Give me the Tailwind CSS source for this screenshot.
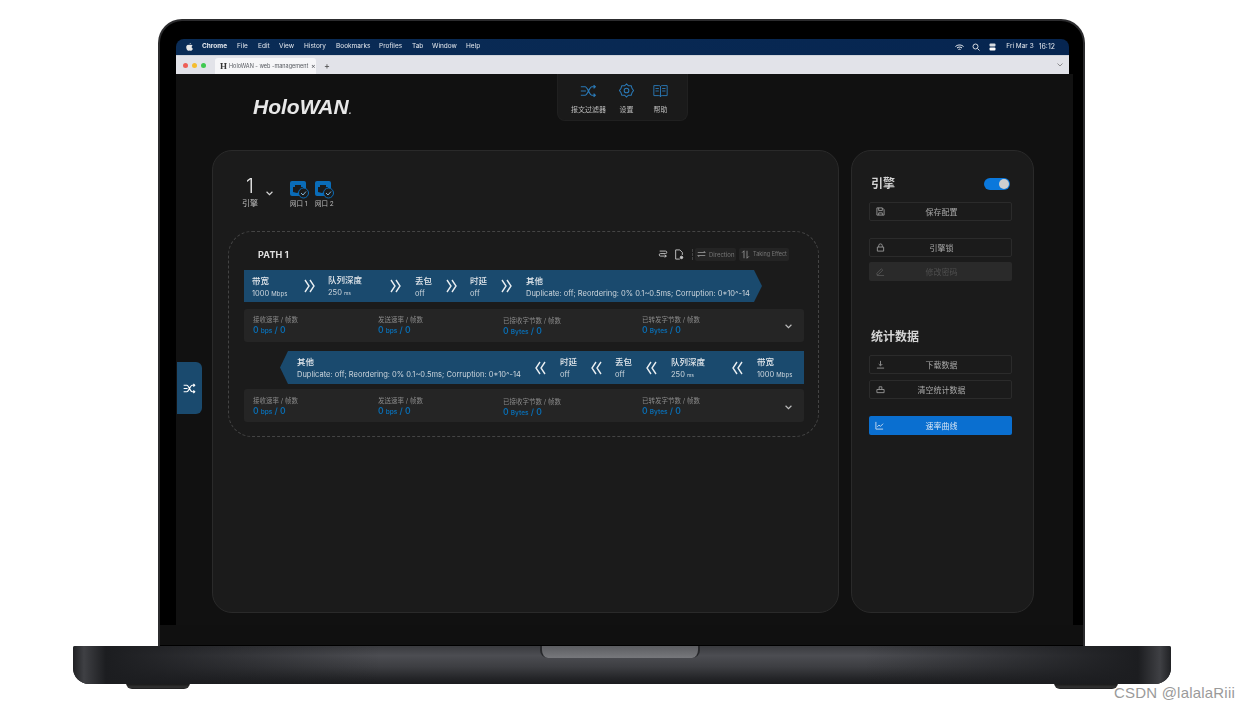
<!DOCTYPE html>
<html lang="zh">
<head>
  <meta charset="UTF-8" />
  <title>HoloWAN</title>
  <script src="https://cdn.jsdelivr.net/npm/@tailwindcss/browser@4"></script>
</head>
<body class="bg-white">
<div class="relative w-[1249px] h-[709px] overflow-hidden bg-white font-['Inter','Noto_Sans_CJK_SC',sans-serif]">

  <!-- 机身底座 -->
  <div class="absolute left-[126px] top-[683px] w-[64px] h-[6px] rounded-b-md bg-[linear-gradient(180deg,#111,#333_70%,#1c1c1e)] blur-[0.4px]"></div>
  <div class="absolute left-[1054px] top-[683px] w-[64px] h-[6px] rounded-b-md bg-[linear-gradient(180deg,#111,#333_70%,#1c1c1e)] blur-[0.4px]"></div>
  <div class="absolute left-[73px] top-[646px] w-[1098px] h-[38px] rounded-b-[16px] rounded-t-[2px] bg-[linear-gradient(180deg,#3a3b3f_0%,#4c4d52_25%,#3d3e42_55%,#242528_85%,#1b1b1e_100%)] overflow-hidden blur-[0.4px]">
    <div class="absolute inset-0 bg-[linear-gradient(90deg,#202124_0%,#3f4044_1%,#1c1d20_3%,transparent_28%,transparent_72%,#1c1d20_97%,#3f4044_99%,#202124_100%)]"></div>
    <div class="absolute left-[467px] top-0 w-[160px] h-[12px] rounded-b-lg bg-[linear-gradient(180deg,#5c5d61,#77787c)] border-l-2 border-r-2 border-[#26272a]"></div>
  </div>

  <!-- 屏幕外壳 -->
  <div class="absolute left-[158px] top-[19px] w-[927px] h-[627px] rounded-t-[24px] bg-black border-x-2 border-t-2 border-[#2c2c2e] pt-[18px] px-[16px] blur-[0.4px]">
    <div class="relative w-[897px] h-[586px] flex flex-col">

      <!-- 系统菜单栏 -->
      <div class="w-[893px] h-[16px] shrink-0 rounded-t-lg bg-[linear-gradient(90deg,#0a2c56,#062550)] flex items-center text-[6.5px] text-[#e4e8ee] pl-[10px] pr-[14px]">
        <svg class="w-[7px] h-[8px] mr-[9px]" viewBox="0 0 16 18" fill="#e8e8e8"><path d="M11 0c.2 1.800-1.400 3.500-3 3.400C7.800 1.700 9.500.1 11 0zM8 4.600c.9 0 2-.9 3.400-.9 1.600 0 2.900.8 3.600 2-3.100 1.800-2.500 5.900.7 7.100-.8 2-2.300 4.700-4 4.700-1.100 0-1.700-.7-3-.7s-2 .7-3 .7C3.300 17.500.5 13 .5 9.300c0-3.300 2.200-5.500 4.500-5.500 1.300 0 2.300.8 3 .8z"/></svg>
        <span class="font-bold w-[35px]">Chrome</span>
        <span class="w-[21px]">File</span>
        <span class="w-[21px]">Edit</span>
        <span class="w-[25px]">View</span>
        <span class="w-[32px]">History</span>
        <span class="w-[43px]">Bookmarks</span>
        <span class="w-[33px]">Profiles</span>
        <span class="w-[20px]">Tab</span>
        <span class="w-[34px]">Window</span>
        <span>Help</span>
        <div class="ml-auto flex items-center gap-[8px]">
          <svg class="w-[9px] h-[7px]" viewBox="0 0 18 14" fill="none" stroke="#fff" stroke-width="2"><path d="M1 5c4.500-4 11.500-4 16 0M4 8c2.800-2.500 7.200-2.500 10 0M7 11c1.200-1 2.800-1 4 0"/></svg>
          <svg class="w-[8px] h-[8px]" viewBox="0 0 16 16" fill="none" stroke="#d8dce2" stroke-width="2"><circle cx="7" cy="7" r="5"/><path d="M11 11l4 4"/></svg>
          <svg class="w-[9px] h-[8px]" viewBox="0 0 18 16" fill="#d8dce2"><rect x="3" y="1" width="12" height="6" rx="2"/><rect x="3" y="9" width="12" height="6" rx="2" fill="#fff"/></svg>
          <span class="ml-[1px]">Fri Mar 3</span>
          <span class="-ml-[3px] text-[7px]">16:12</span>
        </div>
      </div>

      <!-- 浏览器标签栏 -->
      <div class="w-[893px] h-[19px] shrink-0 bg-[#e2e3e9] flex items-end border-t border-[#cfd3da]">
        <div class="flex gap-[4px] pl-[7px] self-center">
          <span class="w-[5px] h-[5px] rounded-full bg-[#ee5f57]"></span>
          <span class="w-[5px] h-[5px] rounded-full bg-[#f5bd2f]"></span>
          <span class="w-[5px] h-[5px] rounded-full bg-[#3fc950]"></span>
        </div>
        <div class="ml-[9px] w-[101px] h-[16px] bg-[#f6f6f8] rounded-t-[3px] flex items-center pl-[5px] text-[5.5px] text-[#55585e]">
          <span class="w-[9px] font-['Liberation_Serif',serif] font-bold text-[9px] leading-none text-[#333]">H</span>
          <span class="w-[82px]">HoloWAN - web -management</span>
          <span class="text-[7px]">×</span>
        </div>
        <span class="ml-[8px] self-center text-[9px] leading-none text-[#444]">+</span>
        <svg class="ml-auto mr-[6px] self-center w-[6px] h-[4px]" viewBox="0 0 12 8" fill="none" stroke="#777" stroke-width="1.600"><path d="M1 1l5 5 5-5"/></svg>
      </div>

      <!-- 页面内容 -->
      <div class="relative flex-1 bg-[#111111] overflow-hidden">
        <div class="h-[76px] pl-[77px] pt-[20px] text-[21px] leading-[26px] font-['Liberation_Sans',sans-serif] italic font-bold text-[#e8e8e8]">HoloWAN<span class="text-[12px] font-normal">.</span></div>

        <!-- 顶部工具条 -->
        <div class="absolute left-[381px] top-0 w-[131px] h-[47px] rounded-b-lg bg-[#1a1a1a] border border-t-0 border-[#202020] flex pl-[10px] pt-[10px] text-[7px] leading-[9px] text-[#bdbdbd]">
          <div class="w-[41px] flex flex-col items-center gap-[7px]">
            <svg class="w-[17px] h-[14px]" viewBox="0 0 20 16" fill="none" stroke="#2a7ab8" stroke-width="1.400"><path d="M1 3h5c3 0 5 10 8 10h4M1 13h5c3 0 5-10 8-10h4M1 8h6M16 1l2 2-2 2M16 11l2 2-2 2"/></svg>
            <span class="whitespace-nowrap">报文过滤器</span>
          </div>
          <div class="w-[29px] flex flex-col items-center gap-[7px] ml-[3px]">
            <svg class="w-[15px] h-[15px] -mt-[1px]" viewBox="0 0 16 16" fill="none" stroke="#2a7ab8" stroke-width="1.100"><path d="M8 1l2 2h3l1 3 1.500 2-1.500 2-1 3h-3l-2 2-2-2H3l-1-3L.5 8 2 6l1-3h3z"/><circle cx="8" cy="8" r="2.500"/></svg>
            <span>设置</span>
          </div>
          <div class="w-[29px] flex flex-col items-center gap-[7px] ml-[5px]">
            <svg class="w-[15px] h-[14px]" viewBox="0 0 18 16" fill="none" stroke="#2a7ab8" stroke-width="1.100"><path d="M1 1.500h6c1 0 2 .5 2 1.500 0-1 1-1.500 2-1.500h6v12h-6c-1 0-2 .5-2 1.500 0-1-1-1.500-2-1.500H1zM9 3v12M3 5h4M3 8h4M11 5h4M11 8h4"/></svg>
            <span>帮助</span>
          </div>
        </div>

        <!-- 左侧抽屉按钮 -->
        <div class="absolute left-[1px] top-[288px] w-[25px] h-[52px] rounded-r-md bg-[#1a4a6e] flex items-center justify-center">
          <svg class="w-[13px] h-[11px]" viewBox="0 0 20 16" fill="none" stroke="#fff" stroke-width="1.800"><path d="M1 3h5c3 0 5 10 8 10h4M1 13h5c3 0 5-10 8-10h4M1 8h6M16 1l2 2-2 2M16 11l2 2-2 2"/></svg>
        </div>

        <div class="flex ml-[36px] gap-[12px]">
          <!-- 主面板 -->
          <div class="w-[627px] h-[463px] rounded-[20px] bg-[#1b1b1b] border border-[#2a2a2a] pl-[15px]">
            <div class="h-[81px] flex items-start pl-[13px] pt-[23px] text-[#bdbdbd]">
              <div class="flex flex-col items-center w-[18px]">
                <span class="text-[20px] leading-[24px] font-light text-[#e6e6e6]">1</span>
                <span class="text-[8px] leading-[10px] mt-[0px] whitespace-nowrap">引擎</span>
              </div>
              <svg class="w-[7px] h-[5px] ml-[7px] mt-[17px]" viewBox="0 0 12 8" fill="none" stroke="#d8d8d8" stroke-width="2"><path d="M1 1l5 5 5-5"/></svg>
              <div class="flex gap-[5px] ml-[17px] mt-[7px]">
                <div class="w-[20px] flex flex-col">
                  <svg class="w-[20px] h-[18px]" viewBox="0 0 20 18"><rect x="0" y="0" width="16" height="15" rx="2" fill="#0a6cb8"/><path d="M3 11V6h2V4h6v2h2v5H9l-2 1z" fill="#1b1b1b"/><circle cx="13.500" cy="12" r="5" fill="#1b1b1b" stroke="#0a6cb8"/><path d="M11 12l2 2 3-3.500" stroke="#7fb4d8" fill="none"/></svg>
                  <span class="text-[6.5px] leading-[9px] mt-[1px] whitespace-nowrap">网口 1</span>
                </div>
                <div class="w-[20px] flex flex-col">
                  <svg class="w-[20px] h-[18px]" viewBox="0 0 20 18"><rect x="0" y="0" width="16" height="15" rx="2" fill="#0a6cb8"/><path d="M3 11V6h2V4h6v2h2v5H9l-2 1z" fill="#1b1b1b"/><circle cx="13.500" cy="12" r="5" fill="#1b1b1b" stroke="#0a6cb8"/><path d="M11 12l2 2 3-3.500" stroke="#7fb4d8" fill="none"/></svg>
                  <span class="text-[6.5px] leading-[9px] mt-[1px] whitespace-nowrap">网口 2</span>
                </div>
              </div>
            </div>

            <!-- PATH 虚线框 -->
            <div class="-mt-[1px] w-[591px] h-[206px] rounded-[24px] border border-dashed border-[#444444] px-[15px]">
              <div class="h-[38px] flex items-center pl-[14px] pr-[14px] pt-[6px]">
                <span class="text-[9px] font-bold text-[#e0e0e0] tracking-[0.2px] mt-[2px]">PATH 1</span>
                <div class="ml-auto flex items-center text-[6px] text-[#777]">
                  <svg class="w-[10px] h-[10px]" viewBox="0 0 12 12" fill="none" stroke="#c8c8c8" stroke-width="1.100"><path d="M2 2.500h7a1.500 1.500 0 010 3H3a1.500 1.500 0 000 3h7M8 7l2 1.500L8 10"/></svg>
                  <svg class="w-[10px] h-[11px] ml-[6px]" viewBox="0 0 12 13" fill="none" stroke="#c8c8c8" stroke-width="1.100"><path d="M7 12H2V1h5l3 3v3"/><circle cx="9" cy="10" r="1.500" fill="#c8c8c8"/></svg>
                  <span class="w-px h-[11px] ml-[8px] border-l border-dashed border-[#444]"></span>
                  <div class="ml-[2px] w-[41px] h-[13px] rounded-[2px] bg-[#242424] flex items-center pl-[2px] gap-[3px]">
                    <svg class="w-[9px] h-[8px]" viewBox="0 0 12 10" fill="none" stroke="#999" stroke-width="1.100"><path d="M1 3h10M9 1l2 2M11 7H1M3 9L1 7"/></svg>Direction
                  </div>
                  <div class="ml-[3px] w-[50px] h-[13px] rounded-[2px] bg-[#242424] flex items-center pl-[2px] gap-[3px] whitespace-nowrap text-[5.5px]">
                    <svg class="w-[9px] h-[9px]" viewBox="0 0 12 12" fill="none" stroke="#999" stroke-width="1.100"><path d="M4 11V1M1.500 3.500L4 1M8 1v10M10.500 8.500L8 11"/></svg>Taking Effect
                  </div>
                </div>
              </div>

              <!-- 去向链路 -->
              <div class="w-[518px] h-[32px] bg-[#1a4a6e] [clip-path:polygon(0_0,calc(100%-8px)_0,100%_50%,calc(100%-8px)_100%,0_100%)] flex items-center pl-[8px] text-[#e4e8ec]">
                <div class="w-[52px] pt-[2px]"><p class="text-[8.500px] leading-[12px] font-medium">带宽</p><p class="text-[7.500px] leading-[13px] text-[#cdd6dd]">1000 <span class="text-[6px]">Mbps</span></p></div>
                <svg class="w-[11px] h-[14px] mr-[13px]" viewBox="0 0 11 14" fill="none" stroke="#e8edf1" stroke-width="1.400"><path d="M1 1l4 6-4 6M6 1l4 6-4 6"/></svg>
                <div class="w-[62px] pt-[2px]"><p class="text-[8.500px] leading-[12px] font-medium">队列深度</p><p class="text-[7.500px] leading-[13px] text-[#cdd6dd]">250 <span class="text-[5px]">ms</span></p></div>
                <svg class="w-[11px] h-[14px] mr-[14px]" viewBox="0 0 11 14" fill="none" stroke="#e8edf1" stroke-width="1.400"><path d="M1 1l4 6-4 6M6 1l4 6-4 6"/></svg>
                <div class="w-[31px] pt-[2px]"><p class="text-[8.500px] leading-[12px] font-medium">丢包</p><p class="text-[7.500px] leading-[13px] text-[#cdd6dd]">off</p></div>
                <svg class="w-[11px] h-[14px] mr-[13px]" viewBox="0 0 11 14" fill="none" stroke="#e8edf1" stroke-width="1.400"><path d="M1 1l4 6-4 6M6 1l4 6-4 6"/></svg>
                <div class="w-[31px] pt-[2px]"><p class="text-[8.500px] leading-[12px] font-medium">时延</p><p class="text-[7.500px] leading-[13px] text-[#cdd6dd]">off</p></div>
                <svg class="w-[11px] h-[14px] mr-[14px]" viewBox="0 0 11 14" fill="none" stroke="#e8edf1" stroke-width="1.400"><path d="M1 1l4 6-4 6M6 1l4 6-4 6"/></svg>
                <div class="whitespace-nowrap pt-[2px]"><p class="text-[8.500px] leading-[12px] font-medium">其他</p><p class="text-[7.500px] leading-[13px] text-[#cdd6dd]">Duplicate: off; Reordering: 0% 0.1~0.5ms; Corruption: 0*10^-14</p></div>
              </div>

              <div class="mt-[7px] w-[560px] h-[33px] rounded-[3px] bg-[#252525] flex items-center pl-[9px] pr-[12px] pt-[1px]">
                <div class="w-[125px]"><p class="text-[6.500px] leading-[10px] text-[#8a8a8a]">接收速率 / 帧数</p><p class="text-[8.500px] leading-[11px] font-semibold text-[#0a6cb0]">0 <span class="text-[6.500px]">bps</span> / 0</p></div>
                <div class="w-[125px]"><p class="text-[6.500px] leading-[10px] text-[#8a8a8a]">发送速率 / 帧数</p><p class="text-[8.500px] leading-[11px] font-semibold text-[#0a6cb0]">0 <span class="text-[6.500px]">bps</span> / 0</p></div>
                <div class="w-[139px] mt-[1px]"><p class="text-[6.500px] leading-[10px] text-[#8a8a8a]">已接收字节数 / 帧数</p><p class="text-[8.500px] leading-[10px] font-semibold text-[#0a6cb0]">0 <span class="text-[6.500px]">Bytes</span> / 0</p></div>
                <div><p class="text-[6.500px] leading-[10px] text-[#8a8a8a]">已转发字节数 / 帧数</p><p class="text-[8.500px] leading-[11px] font-semibold text-[#0a6cb0]">0 <span class="text-[6.500px]">Bytes</span> / 0</p></div>
                <svg class="ml-auto w-[7px] h-[5px]" viewBox="0 0 12 8" fill="none" stroke="#bdbdbd" stroke-width="2"><path d="M1 1l5 5 5-5"/></svg>
              </div>

              <!-- 回向链路 -->
              <div class="mt-[9px] ml-[36px] w-[524px] h-[33px] bg-[#1a4a6e] [clip-path:polygon(8px_0,100%_0,100%_100%,8px_100%,0_50%)] flex items-center pl-[17px] text-[#e4e8ec]">
                <div class="w-[238px] whitespace-nowrap pt-[2px]"><p class="text-[8.500px] leading-[12px] font-medium">其他</p><p class="text-[7.500px] leading-[13px] text-[#cdd6dd]">Duplicate: off; Reordering: 0% 0.1~0.5ms; Corruption: 0*10^-14</p></div>
                <svg class="w-[11px] h-[14px] mr-[14px]" viewBox="0 0 11 14" fill="none" stroke="#e8edf1" stroke-width="1.400"><path d="M5 1L1 7l4 6M10 1L6 7l4 6"/></svg>
                <div class="w-[31px] pt-[2px]"><p class="text-[8.500px] leading-[12px] font-medium">时延</p><p class="text-[7.500px] leading-[13px] text-[#cdd6dd]">off</p></div>
                <svg class="w-[11px] h-[14px] mr-[13px]" viewBox="0 0 11 14" fill="none" stroke="#e8edf1" stroke-width="1.400"><path d="M5 1L1 7l4 6M10 1L6 7l4 6"/></svg>
                <div class="w-[31px] pt-[2px]"><p class="text-[8.500px] leading-[12px] font-medium">丢包</p><p class="text-[7.500px] leading-[13px] text-[#cdd6dd]">off</p></div>
                <svg class="w-[11px] h-[14px] mr-[14px]" viewBox="0 0 11 14" fill="none" stroke="#e8edf1" stroke-width="1.400"><path d="M5 1L1 7l4 6M10 1L6 7l4 6"/></svg>
                <div class="w-[61px] pt-[2px]"><p class="text-[8.500px] leading-[12px] font-medium">队列深度</p><p class="text-[7.500px] leading-[13px] text-[#cdd6dd]">250 <span class="text-[5px]">ms</span></p></div>
                <svg class="w-[11px] h-[14px] mr-[14px]" viewBox="0 0 11 14" fill="none" stroke="#e8edf1" stroke-width="1.400"><path d="M5 1L1 7l4 6M10 1L6 7l4 6"/></svg>
                <div class="whitespace-nowrap pt-[2px]"><p class="text-[8.500px] leading-[12px] font-medium">带宽</p><p class="text-[7.500px] leading-[13px] text-[#cdd6dd]">1000 <span class="text-[6px]">Mbps</span></p></div>
              </div>

              <div class="mt-[5px] w-[560px] h-[33px] rounded-[3px] bg-[#252525] flex items-center pl-[9px] pr-[12px] pt-[3px]">
                <div class="w-[125px]"><p class="text-[6.500px] leading-[10px] text-[#8a8a8a]">接收速率 / 帧数</p><p class="text-[8.500px] leading-[11px] font-semibold text-[#0a6cb0]">0 <span class="text-[6.500px]">bps</span> / 0</p></div>
                <div class="w-[125px]"><p class="text-[6.500px] leading-[10px] text-[#8a8a8a]">发送速率 / 帧数</p><p class="text-[8.500px] leading-[11px] font-semibold text-[#0a6cb0]">0 <span class="text-[6.500px]">bps</span> / 0</p></div>
                <div class="w-[139px] mt-[1px]"><p class="text-[6.500px] leading-[10px] text-[#8a8a8a]">已接收字节数 / 帧数</p><p class="text-[8.500px] leading-[10px] font-semibold text-[#0a6cb0]">0 <span class="text-[6.500px]">Bytes</span> / 0</p></div>
                <div><p class="text-[6.500px] leading-[10px] text-[#8a8a8a]">已转发字节数 / 帧数</p><p class="text-[8.500px] leading-[11px] font-semibold text-[#0a6cb0]">0 <span class="text-[6.500px]">Bytes</span> / 0</p></div>
                <svg class="ml-auto w-[7px] h-[5px]" viewBox="0 0 12 8" fill="none" stroke="#bdbdbd" stroke-width="2"><path d="M1 1l5 5 5-5"/></svg>
              </div>
            </div>
          </div>

          <!-- 右侧操作栏 -->
          <div class="w-[183px] h-[463px] rounded-[20px] bg-[#1b1b1b] border border-[#2a2a2a] pl-[17px] pr-[21px] pt-[24px] text-[8px] text-[#a8a8a8]">
            <div class="h-[17px] flex items-center pl-[2px] pr-[2px] text-[12px] font-semibold text-[#d4d4d4]">
              引擎
              <span class="ml-auto w-[26px] h-[12px] rounded-full bg-[#0a78dc] flex items-center justify-end pr-[1px]"><span class="w-[10px] h-[10px] rounded-full bg-[#cfcfcf]"></span></span>
            </div>
            <div class="mt-[10px] h-[19px] rounded-[2px] border border-[#2b2b2b] flex items-center pl-[6px]">
              <svg class="w-[9px] h-[9px]" viewBox="0 0 10 10" fill="none" stroke="#999"><path d="M1 1h6l2 2v6H1zM3 1v3h4V1M3 9V6.500h4V9"/></svg>
              <span class="flex-1 text-center pr-[13px]">保存配置</span>
            </div>
            <div class="mt-[17px] h-[19px] rounded-[2px] border border-[#2b2b2b] flex items-center pl-[6px]">
              <svg class="w-[9px] h-[9px]" viewBox="0 0 10 10" fill="none" stroke="#999"><path d="M1.500 4.500h7v4.500h-7zM3 4.500V3a2 2 0 014 0v1.500"/></svg>
              <span class="flex-1 text-center pr-[13px]">引擎锁</span>
            </div>
            <div class="mt-[5px] h-[19px] rounded-[2px] bg-[#2a2a2a] flex items-center pl-[7px] text-[#4f4f4f]">
              <svg class="w-[9px] h-[9px]" viewBox="0 0 10 10" fill="none" stroke="#555"><path d="M1 7l5-5 1.500 1.500-5 5H1zM1 9.500h8"/></svg>
              <span class="flex-1 text-center pr-[14px]">修改密码</span>
            </div>
            <div class="mt-[47px] h-[18px] flex items-center pl-[2px] text-[12px] font-semibold text-[#d4d4d4]">统计数据</div>
            <div class="mt-[9px] h-[19px] rounded-[2px] border border-[#2b2b2b] flex items-center pl-[6px]">
              <svg class="w-[9px] h-[9px]" viewBox="0 0 10 10" fill="none" stroke="#999"><path d="M5 1v5M3 4.500L5 6.500l2-2M1 9h8"/></svg>
              <span class="flex-1 text-center pr-[13px]">下载数据</span>
            </div>
            <div class="mt-[6px] h-[19px] rounded-[2px] border border-[#2b2b2b] flex items-center pl-[6px]">
              <svg class="w-[9px] h-[9px]" viewBox="0 0 10 10" fill="none" stroke="#999"><path d="M1 5h8v3.500H1zM3.500 5V2h3v3"/></svg>
              <span class="flex-1 text-center pr-[13px]">清空统计数据</span>
            </div>
            <div class="mt-[17px] h-[19px] rounded-[2px] bg-[#0a6fd0] flex items-center pl-[6px] text-[#d8e6f4]">
              <svg class="w-[9px] h-[9px]" viewBox="0 0 10 10" fill="none" stroke="#cfe0f2"><path d="M1 1v8h8M2.500 6.500l2-2 1.500 1.500 3-3"/></svg>
              <span class="flex-1 text-center pr-[13px]">速率曲线</span>
            </div>
          </div>
        </div>
      </div>
    </div>
    <!-- 下边框 -->
    <div class="-mx-[16px] h-[20px] bg-[#101010]"></div>
  </div>

  <!-- 水印 -->
  <div class="absolute left-[1114px] top-[684px] text-[15px] leading-[18px] font-['Liberation_Sans',sans-serif] text-[#9a9a9a] tracking-[0.2px]">CSDN @lalalaRiii</div>
</div>
</body>
</html>
